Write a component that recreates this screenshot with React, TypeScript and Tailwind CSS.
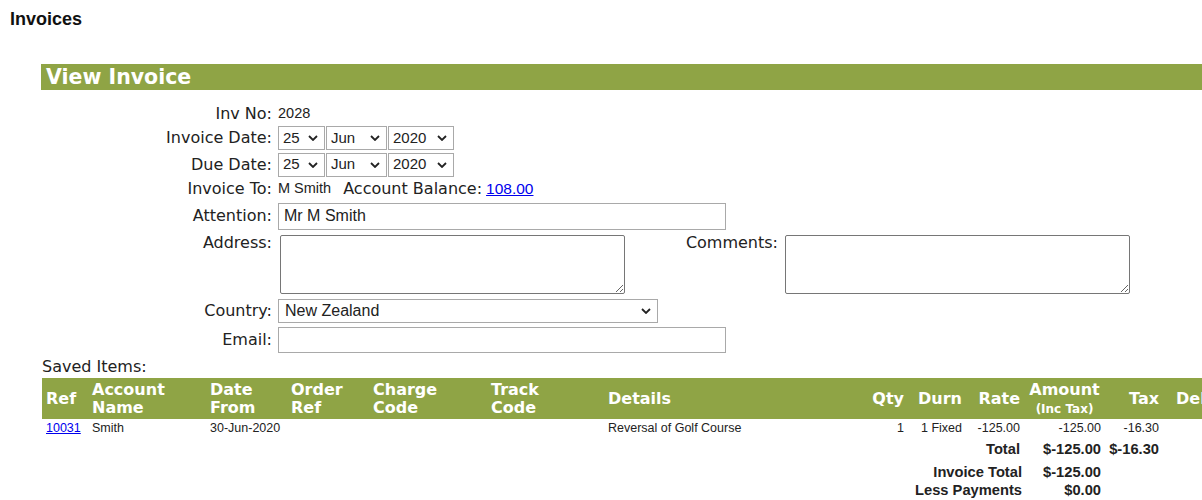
const labelFont = { fontFamily: '"DejaVu Sans", Verdana, sans-serif' };
const arial = { fontFamily: '"Liberation Sans", Arial, sans-serif' };

function Chevron() {
  return (
    <svg width="10" height="6" viewBox="0 0 10 6" className="shrink-0">
      <path d="M1 1l4 4 4-4" fill="none" stroke="#222" strokeWidth="1.8" />
    </svg>
  );
}

function FakeSelect({ value, className }: { value: string; className: string }) {
  return (
    <div
      style={arial}
      className={`flex items-center border border-[#a9a9a9] bg-white pl-[4px] pr-[6px] text-[15px] text-[#222] ${className}`}
    >
      <span>{value}</span>
      <span className="ml-auto">
        <Chevron />
      </span>
    </div>
  );
}

function DateSelects() {
  return (
    <div className="flex gap-[1px]">
      <FakeSelect value="25" className="w-[47px] h-[24px]" />
      <FakeSelect value="Jun" className="w-[61px] h-[24px]" />
      <FakeSelect value="2020" className="w-[66px] h-[24px]" />
    </div>
  );
}

function Label({ children, className = "" }: { children: React.ReactNode; className?: string }) {
  return <div className={`w-[272px] shrink-0 text-right leading-[18px] ${className}`}>{children}</div>;
}

const headers: { label: React.ReactNode; align: string }[] = [
  { label: "Ref", align: "text-left" },
  { label: <>Account<br />Name</>, align: "text-left" },
  { label: <>Date<br />From</>, align: "text-left" },
  { label: <>Order<br />Ref</>, align: "text-left" },
  { label: <>Charge<br />Code</>, align: "text-left" },
  { label: <>Track<br />Code</>, align: "text-left" },
  { label: "Details", align: "text-left" },
  { label: "Qty", align: "text-right" },
  { label: "Durn", align: "text-right" },
  { label: "Rate", align: "text-right" },
  {
    label: (
      <>
        Amount
        <br />
        <span className="text-[12px] leading-[14px]">(Inc Tax)</span>
      </>
    ),
    align: "text-center",
  },
  { label: "Tax", align: "text-right" },
  { label: <span className="pl-[9px]">Delete</span>, align: "text-left" },
];

const colWidths = [46, 118, 81, 82, 118, 117, 260, 44, 58, 58, 81, 58, 70];

export default function App() {
  return (
    <div className="w-full h-[500px] overflow-hidden bg-white text-[#222]">
      <div className="min-w-[1260px]">
        <div style={arial} className="pl-[10px] pt-[8px] text-[18px] font-bold leading-[22px] text-[#111]">
          Invoices
        </div>

        <div className="ml-[41px] mt-[34px] h-[26px] bg-[#8fa445]">
          <div style={labelFont} className="pl-[5px] text-[20.5px] font-bold leading-[26px] text-white">
            View Invoice
          </div>
        </div>

        <div style={labelFont} className="mt-[13px] flex flex-col text-[16px] text-[#222]">
          <div className="flex h-[22px] items-center">
            <Label>Inv No:</Label>
            <span style={arial} className="ml-[6px] text-[14.5px]">2028</span>
          </div>

          <div className="flex h-[26px] items-center">
            <Label>Invoice Date:</Label>
            <div className="ml-[6px]">
              <DateSelects />
            </div>
          </div>

          <div className="flex h-[27px] items-center">
            <Label>Due Date:</Label>
            <div className="ml-[6px]">
              <DateSelects />
            </div>
          </div>

          <div className="flex h-[22px] items-center">
            <Label>Invoice To:</Label>
            <span style={arial} className="ml-[6px] text-[14.5px]">M Smith</span>
            <span className="ml-[12px]">Account Balance:</span>
            <a href="#" style={arial} className="ml-[4px] text-[15.5px] text-[#0000ee] underline">
              108.00
            </a>
          </div>

          <div className="flex h-[32px] items-center">
            <Label>Attention:</Label>
            <input
              readOnly
              value="Mr M Smith"
              style={arial}
              className="ml-[6px] h-[27px] w-[448px] border border-[#a9a9a9] px-[5px] text-[16px] text-[#222] outline-none"
            />
          </div>

          <div className="flex h-[65px] items-start">
            <Label className="pt-[2px]">Address:</Label>
            <textarea
              readOnly
              className="ml-[8px] mt-[3px] h-[59px] w-[345px] rounded-[2px] border border-[#767676] outline-none"
            />
            <div className="w-[153px] shrink-0 pt-[2px] text-right leading-[18px]">Comments:</div>
            <textarea
              readOnly
              className="ml-[7px] mt-[3px] h-[59px] w-[345px] rounded-[2px] border border-[#767676] outline-none"
            />
          </div>

          <div className="flex h-[28px] items-center">
            <Label>Country:</Label>
            <div className="ml-[6px]">
              <FakeSelect value="New Zealand" className="h-[24px] w-[380px] !pl-[6px] !text-[16px]" />
            </div>
          </div>

          <div className="flex h-[30px] items-center">
            <Label>Email:</Label>
            <input
              readOnly
              style={arial}
              className="ml-[6px] h-[26px] w-[448px] border border-[#a9a9a9] px-[5px] text-[16px] outline-none"
            />
          </div>

          <div className="flex h-[23px] items-center pl-[42px] leading-[18px]">Saved Items:</div>
        </div>

        <table className="ml-[42px] w-[1191px] table-fixed border-collapse">
          <colgroup>
            {colWidths.map((w, i) => (
              <col key={i} style={{ width: w }} />
            ))}
          </colgroup>
          <thead>
            <tr className="h-[41px] bg-[#8fa445]">
              {headers.map((h, i) => (
                <th
                  key={i}
                  style={labelFont}
                  className={`px-[4px] align-middle text-[16px] font-bold leading-[18px] text-white whitespace-nowrap ${h.align}`}
                >
                  {h.label}
                </th>
              ))}
            </tr>
          </thead>
          <tbody style={arial} className="text-[12.5px] text-[#222]">
            <tr className="h-[18px]">
              <td className="px-[4px]">
                <a href="#" className="text-[#0000ee] underline">10031</a>
              </td>
              <td className="px-[4px]">Smith</td>
              <td className="px-[4px] whitespace-nowrap">30-Jun-2020</td>
              <td className="px-[4px]"></td>
              <td className="px-[4px]"></td>
              <td className="px-[4px]"></td>
              <td className="px-[4px] whitespace-nowrap">Reversal of Golf Course</td>
              <td className="px-[4px] text-right">1</td>
              <td className="px-[4px] text-right whitespace-nowrap">1 Fixed</td>
              <td className="px-[4px] text-right">-125.00</td>
              <td className="px-[4px] text-right">-125.00</td>
              <td className="px-[4px] text-right">-16.30</td>
              <td></td>
            </tr>
            <tr className="h-[20px] text-[14.7px] font-bold">
              <td colSpan={10} className="px-[4px] text-right">Total</td>
              <td className="px-[4px] text-right">$-125.00</td>
              <td className="px-[4px] text-right">$-16.30</td>
              <td></td>
            </tr>
            <tr className="h-[21px] text-[14.7px] font-bold">
              <td colSpan={10} className="pr-[2px] text-right align-bottom leading-[18px]">Invoice Total</td>
              <td className="px-[4px] text-right align-bottom leading-[18px]">$-125.00</td>
              <td colSpan={2}></td>
            </tr>
            <tr className="h-[18px] text-[14.7px] font-bold">
              <td colSpan={10} className="pr-[2px] text-right leading-[18px]">Less Payments</td>
              <td className="px-[4px] text-right leading-[18px]">$0.00</td>
              <td colSpan={2}></td>
            </tr>
          </tbody>
        </table>
      </div>
    </div>
  );
}
